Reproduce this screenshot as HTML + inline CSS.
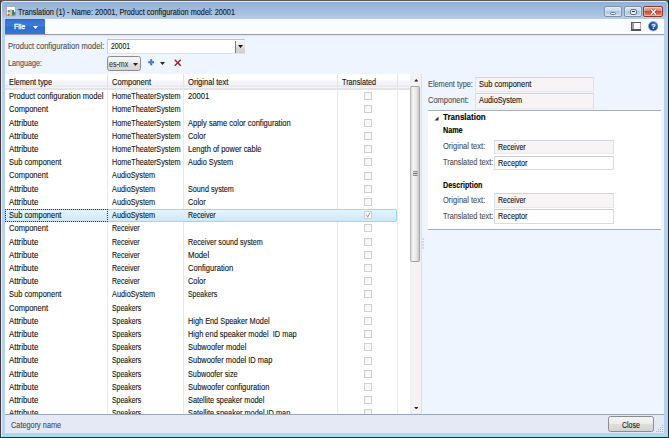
<!DOCTYPE html>
<html><head><meta charset="utf-8">
<style>
*{box-sizing:border-box;margin:0;padding:0}
html,body{width:669px;height:438px;overflow:hidden;background:#3c3c3c}
body{font-family:"Liberation Sans",sans-serif;font-size:8.2px;color:#111;position:relative}
.a{position:absolute;white-space:nowrap}
.tx{position:absolute;white-space:nowrap;line-height:10px;-webkit-text-stroke:0.1px currentColor;transform-origin:0 0}
#topline{left:0;top:0;width:669px;height:1px;background:#5e5b57}
#rcol{left:668px;top:0;width:1px;height:438px;background:#0b3440}
#brow{left:0;top:437px;width:669px;height:1px;background:#0b3440}
#frame{left:1px;top:1px;width:667px;height:436px;border-left:1px solid #e6f0fb;border-top:1px solid #d9e8f9;border-right:1px solid #92e4f2;border-bottom:1px solid #92e4f2;border-radius:3px 3px 0 0;background:linear-gradient(#8daed6 0,#97b5d8 2px,#a0bbdc 8px,#abc4e2 13px,#b5cde9 16px,#b9d0ee 18px,#b9d0ef 100%)}
#ribbon{left:5px;top:19px;width:659px;height:16px;background:#fbfcfe;border-bottom:1px solid #999ca4}
#file{left:5px;top:19px;width:40px;height:15px;background:linear-gradient(#2a58b2 0,#3472d2 1px,#3b7bd9 45%,#2f6bcc 55%,#3678d8 100%);border-radius:1px 1px 0 0;color:#fff}
#file .tx{-webkit-text-stroke:0.3px #fff}
#content{left:5px;top:35px;width:659px;height:379px;background:linear-gradient(#e5e6f2 0,#e8eaf5 1px,#edf2fc 2px,#eef5fe 3px)}
#status{left:5px;top:414px;width:659px;height:19px;background:#e5e9f5;border-top:1px solid #9ba7b8}
.lbl{color:#4e4e4e}
.wbtn{position:absolute;top:6px;height:11px;border:1px solid #7d91aa;border-radius:2px;box-shadow:inset 0 0 0 1px rgba(255,255,255,0.35);background:linear-gradient(#dbe6f3,#c8d8eb 45%,#aec4df 50%,#bed2e9 80%,#cddcee)}
.inp{position:absolute;background:#fff;border:1px solid #b9c3cf}
/* grid */
#grid{left:5px;top:74px;width:417px;height:340px;background:#fff;overflow:hidden;border-right:1px solid #d2e2f4}
#ghead{position:absolute;left:0;top:0;width:405px;height:15.5px;background:linear-gradient(#ffffff 0,#ffffff 6.4px,#f4f4fc 6.6px,#f3f3fa 11px,#ececf0 11.2px,#eaeaee 13.3px,#f6f3f5 13.5px,#f4f2f4 14px,#e4e4e8 14.2px,#e4e4e8 15.5px)}
.hs{position:absolute;top:0;width:1px;height:15px;background:#e2e4ea}
.vs{position:absolute;top:15px;width:1px;height:330px;background:#e1ecf8}
.r{position:absolute;left:0;width:405px;height:13.22px}
.r .tx{top:2.1px}
.c1{left:4.4px}.c2{left:106.8px}.c3{left:183px}
.cb{position:absolute;left:358.7px;top:2.2px;width:8.2px;height:8px;border:1px solid #cfcfcf;background:linear-gradient(135deg,#f3f3f3,#ffffff)}
#selbox{position:absolute;left:0;top:135.3px;width:392px;height:12.4px;border:1px solid #9fd5f6;border-radius:2px;background:linear-gradient(#e6f5fe,#cbe9fb)}
#focus{position:absolute;left:0;top:135.3px;width:102.8px;height:12.4px;border:1px dotted #2c3a48}
#scroll{position:absolute;left:405.2px;top:0;width:11px;height:340px;background:linear-gradient(90deg,#f1eff0,#f6f3f4 40%,#f4eff1)}
/* right */
.rl{color:#4e4e4e}
.fld{position:absolute;background:#f8f3f5;border:1px solid #e0e2e8;border-top-color:#d2d5db;border-bottom-color:#e9eaee}
.fldw{position:absolute;background:#fff;border:1px solid #d8dce2;border-top-color:#ccd0d6}
.b{font-weight:bold;color:#000}
</style></head><body>
<div class="a" id="topline"></div>
<div class="a" id="frame"></div>
<div class="a" id="rcol"></div>
<div class="a" id="brow"></div>
<!-- title icon -->
<svg class="a" style="left:6px;top:6px" width="10" height="10" viewBox="0 0 10 10">
<rect x="0.4" y="0.4" width="9.2" height="9.2" fill="#f2f8fc" stroke="#9a9a9a" stroke-width="0.7"></rect>
<rect x="1" y="1" width="8" height="2" fill="#ffffff"></rect>
<circle cx="3" cy="5.2" r="1.3" fill="#4a8ee0"></circle>
<rect x="4.1" y="3.4" width="1.9" height="6" fill="#f2c52a"></rect>
<rect x="6.1" y="4" width="1.9" height="5.4" fill="#2f6ac8"></rect>
<rect x="8" y="6" width="1.5" height="3.4" fill="#4aa048"></rect>
<path d="M1.8 9.4 L3.6 7.8" stroke="#e04a30" stroke-width="1.5"></path>
</svg>
<div class="tx fx" style="left:18.4px;top:7.8px;color:#161616;transform:scaleX(0.894)">Translation (1) - Name: 20001, Product configuration model: 20001</div>
<!-- window buttons -->
<div class="wbtn" style="left:603.5px;width:18px"><div class="a" style="left:5.6px;top:5px;width:6px;height:3.4px;background:#f2f4f6;border:1px solid #66788e;border-radius:1.5px"></div></div>
<div class="wbtn" style="left:623.5px;width:18.5px"><div class="a" style="left:5.6px;top:1.6px;width:7px;height:6px;background:#eef1f4;border:1px solid #5f6f82;border-radius:2px"></div><div class="a" style="left:7.8px;top:4.2px;width:3px;height:1.2px;background:#333"></div></div>
<div class="wbtn" style="left:643.4px;width:19.2px;border-color:#8b3b2f;background:linear-gradient(#f1bcae,#de8570 40%,#c94a30 50%,#d86a52 75%,#e99a88)"><svg class="a" style="left:4.6px;top:0.6px" width="9" height="8" viewBox="0 0 9 8"><path d="M1.9 1.3 L7.1 6.7 M7.1 1.3 L1.9 6.7" stroke="#7a3a30" stroke-width="2.3"></path><path d="M1.9 1.3 L7.1 6.7 M7.1 1.3 L1.9 6.7" stroke="#fff" stroke-width="1.3"></path></svg></div>

<div class="a" id="ribbon"></div>
<div class="a" id="file"><span class="tx fx" style="left:8.7px;top:3.1px;font-size:8.1px;transform:scaleX(0.86)">File</span><svg class="a" style="left:28px;top:7px" width="5" height="3" viewBox="0 0 5 3"><path d="M0 0 L5 0 L2.5 3Z" fill="#fff"></path></svg></div>
<!-- ribbon right icons -->
<svg class="a" style="left:630.5px;top:22px" width="10.5" height="9" viewBox="0 0 10.5 9">
<rect x="0.5" y="0.5" width="9.5" height="8" fill="#fdfdfd" stroke="#5c5c5c" stroke-width="1"></rect>
<rect x="0" y="7" width="10.5" height="2" fill="#555"></rect>
<rect x="1.2" y="1" width="1.6" height="6" fill="#8a8a8a"></rect>
</svg>
<svg class="a" style="left:647.8px;top:21.4px" width="10.4" height="10.4" viewBox="0 0 10.4 10.4">
<defs><radialGradient id="hg" cx="0.6" cy="0.35" r="0.7"><stop offset="0" stop-color="#5a9ae8"></stop><stop offset="0.5" stop-color="#1a4fc0"></stop><stop offset="1" stop-color="#0a2f8a"></stop></radialGradient></defs>
<circle cx="5.2" cy="5.2" r="4.7" fill="url(#hg)" stroke="#9aa4b4" stroke-width="0.9"></circle>
<text x="5.3" y="8.3" font-family="Liberation Sans" font-weight="bold" font-size="7.6" fill="#fff" text-anchor="middle">?</text>
</svg>

<div class="a" id="content"></div>
<div class="tx lbl" style="left: 7.6px; top: 41.9px; transform: scaleX(0.9233);">Product configuration model:</div>
<div class="tx lbl" style="left: 7.7px; top: 58.9px; transform: scaleX(0.8778);">Language:</div>
<div class="inp" style="left:107.2px;top:39.2px;width:138.2px;height:15.2px;border-color:#bcc2cb #d9dde3 #dde1e6 #cdd2d9"><span class="tx fx" style="left:2.8px;top:1.7px;transform:scaleX(0.835)">20001</span>
 <div class="a" style="left:126.8px;top:0.8px;width:10.4px;height:12px;border-left:1.2px solid #7d7d7d;background:linear-gradient(#f7f1f3,#ebe7e9 40%,#d6d6d6 60%,#d0d0d0)"><svg class="a" style="left:2px;top:4.5px" width="5" height="3" viewBox="0 0 5 3"><path d="M0 0 L5 0 L2.5 3Z" fill="#111"></path></svg></div>
</div>
<div class="a" style="left:107.2px;top:55.9px;width:33.6px;height:15.2px;border:1px solid #8a8a8a;border-radius:2.5px;background:linear-gradient(#f6f6f6,#ececec 45%,#dddddd 55%,#d6d6d6)"><div class="a" style="left:0;top:0;width:21px;height:13px;overflow:hidden"><span class="tx fx" style="left:1.2px;top:2.8px;color:#3a3a3a;transform:scaleX(0.865)">es-mx</span></div><svg class="a" style="left:25px;top:6.1px" width="5" height="3" viewBox="0 0 5 3"><path d="M0 0 L5 0 L2.5 3Z" fill="#222"></path></svg></div>
<svg class="a" style="left:147.8px;top:59.4px" width="6.5" height="6.5" viewBox="0 0 6.5 6.5"><path d="M3.25 0.3 V6.2 M0.3 3.25 H6.2" stroke="#2f62c0" stroke-width="1.9"></path><path d="M3.25 1.2 V5.3 M1.2 3.25 H5.3" stroke="#6a9ae0" stroke-width="0.7"></path></svg>
<svg class="a" style="left:160.1px;top:62.1px" width="5" height="3" viewBox="0 0 5 3"><path d="M0 0 L5 0 L2.5 3Z" fill="#222"></path></svg>
<svg class="a" style="left:174px;top:58.6px" width="7.5" height="7.5" viewBox="0 0 8 8"><path d="M0.8 0.8 L7.2 7.2 M7.2 0.8 L0.8 7.2" stroke="#a41f1f" stroke-width="1.5"></path></svg>

<div class="a" id="grid">
 <div id="ghead">
  <span class="tx" style="left: 4.4px; top: 4.1px; transform: scaleX(0.9009);">Element type</span>
  <span class="tx" style="left: 106.9px; top: 4.1px; transform: scaleX(0.9234);">Component</span>
  <span class="tx" style="left: 183px; top: 4.1px; transform: scaleX(0.9263);">Original text</span>
  <span class="tx" style="left: 337px; top: 4.1px; transform: scaleX(0.886);">Translated</span>
  <div class="hs" style="left:102px"></div><div class="hs" style="left:178px"></div><div class="hs" style="left:332px"></div><div class="hs" style="left:392px"></div>
 </div>
 <div class="vs" style="left:102px"></div><div class="vs" style="left:178px"></div><div class="vs" style="left:332px"></div><div class="vs" style="left:392px"></div>
 <div id="selbox"></div><div id="focus"></div>
<div class="r" style="top:16.00px"><span class="tx c1" style="transform: scaleX(0.9263);">Product configuration model</span><span class="tx c2" style="transform: scaleX(0.8859);">HomeTheaterSystem</span><span class="tx c3" style="transform: scaleX(0.9335);">20001</span><div class="cb"></div></div>
<div class="r" style="top:29.22px"><span class="tx c1" style="transform: scaleX(0.9234);">Component</span><span class="tx c2" style="transform: scaleX(0.8859);">HomeTheaterSystem</span><span class="tx c3"></span><div class="cb"></div></div>
<div class="r" style="top:42.44px"><span class="tx c1" style="transform: scaleX(0.9604);">Attribute</span><span class="tx c2" style="transform: scaleX(0.8859);">HomeTheaterSystem</span><span class="tx c3" style="transform: scaleX(0.9175);">Apply same color configuration</span><div class="cb"></div></div>
<div class="r" style="top:55.66px"><span class="tx c1" style="transform: scaleX(0.9604);">Attribute</span><span class="tx c2" style="transform: scaleX(0.8859);">HomeTheaterSystem</span><span class="tx c3" style="transform: scaleX(0.9053);">Color</span><div class="cb"></div></div>
<div class="r" style="top:68.88px"><span class="tx c1" style="transform: scaleX(0.9604);">Attribute</span><span class="tx c2" style="transform: scaleX(0.8859);">HomeTheaterSystem</span><span class="tx c3" style="transform: scaleX(0.912);">Length of power cable</span><div class="cb"></div></div>
<div class="r" style="top:82.10px"><span class="tx c1" style="transform: scaleX(0.9132);">Sub component</span><span class="tx c2" style="transform: scaleX(0.8859);">HomeTheaterSystem</span><span class="tx c3" style="transform: scaleX(0.8936);">Audio System</span><div class="cb"></div></div>
<div class="r" style="top:95.32px"><span class="tx c1" style="transform: scaleX(0.9234);">Component</span><span class="tx c2" style="transform: scaleX(0.8934);">AudioSystem</span><span class="tx c3"></span><div class="cb"></div></div>
<div class="r" style="top:108.54px"><span class="tx c1" style="transform: scaleX(0.9604);">Attribute</span><span class="tx c2" style="transform: scaleX(0.8934);">AudioSystem</span><span class="tx c3" style="transform: scaleX(0.8833);">Sound system</span><div class="cb"></div></div>
<div class="r" style="top:121.76px"><span class="tx c1" style="transform: scaleX(0.9604);">Attribute</span><span class="tx c2" style="transform: scaleX(0.8934);">AudioSystem</span><span class="tx c3" style="transform: scaleX(0.9053);">Color</span><div class="cb"></div></div>
<div class="r" style="top:134.98px"><span class="tx c1" style="transform: scaleX(0.9132);">Sub component</span><span class="tx c2" style="transform: scaleX(0.8934);">AudioSystem</span><span class="tx c3" style="transform: scaleX(0.8546);">Receiver</span><div class="cb"><svg class="a" style="left:0;top:0" width="6.2" height="6" viewBox="0 0 6 6"><path d="M1.2 2.4 L2.6 5.2 L4.9 0.6" stroke="#8a8a8a" stroke-width="0.8" fill="none"></path></svg></div></div>
<div class="r" style="top:148.20px"><span class="tx c1" style="transform: scaleX(0.9234);">Component</span><span class="tx c2" style="transform: scaleX(0.8546);">Receiver</span><span class="tx c3"></span><div class="cb"></div></div>
<div class="r" style="top:161.42px"><span class="tx c1" style="transform: scaleX(0.9604);">Attribute</span><span class="tx c2" style="transform: scaleX(0.8546);">Receiver</span><span class="tx c3" style="transform: scaleX(0.8779);">Receiver sound system</span><div class="cb"></div></div>
<div class="r" style="top:174.64px"><span class="tx c1" style="transform: scaleX(0.9604);">Attribute</span><span class="tx c2" style="transform: scaleX(0.8546);">Receiver</span><span class="tx c3" style="transform: scaleX(0.9496);">Model</span><div class="cb"></div></div>
<div class="r" style="top:187.86px"><span class="tx c1" style="transform: scaleX(0.9604);">Attribute</span><span class="tx c2" style="transform: scaleX(0.8546);">Receiver</span><span class="tx c3" style="transform: scaleX(0.9276);">Configuration</span><div class="cb"></div></div>
<div class="r" style="top:201.08px"><span class="tx c1" style="transform: scaleX(0.9604);">Attribute</span><span class="tx c2" style="transform: scaleX(0.8546);">Receiver</span><span class="tx c3" style="transform: scaleX(0.9053);">Color</span><div class="cb"></div></div>
<div class="r" style="top:214.30px"><span class="tx c1" style="transform: scaleX(0.9132);">Sub component</span><span class="tx c2" style="transform: scaleX(0.8934);">AudioSystem</span><span class="tx c3" style="transform: scaleX(0.8456);">Speakers</span><div class="cb"></div></div>
<div class="r" style="top:227.52px"><span class="tx c1" style="transform: scaleX(0.9234);">Component</span><span class="tx c2" style="transform: scaleX(0.8456);">Speakers</span><span class="tx c3"></span><div class="cb"></div></div>
<div class="r" style="top:240.74px"><span class="tx c1" style="transform: scaleX(0.9604);">Attribute</span><span class="tx c2" style="transform: scaleX(0.8456);">Speakers</span><span class="tx c3" style="transform: scaleX(0.8964);">High End Speaker Model</span><div class="cb"></div></div>
<div class="r" style="top:253.96px"><span class="tx c1" style="transform: scaleX(0.9604);">Attribute</span><span class="tx c2" style="transform: scaleX(0.8456);">Speakers</span><span class="tx c3" style="transform: scaleX(0.9082);">High end speaker model&nbsp; ID map</span><div class="cb"></div></div>
<div class="r" style="top:267.18px"><span class="tx c1" style="transform: scaleX(0.9604);">Attribute</span><span class="tx c2" style="transform: scaleX(0.8456);">Speakers</span><span class="tx c3" style="transform: scaleX(0.9161);">Subwoofer model</span><div class="cb"></div></div>
<div class="r" style="top:280.40px"><span class="tx c1" style="transform: scaleX(0.9604);">Attribute</span><span class="tx c2" style="transform: scaleX(0.8456);">Speakers</span><span class="tx c3" style="transform: scaleX(0.9134);">Subwoofer model ID map</span><div class="cb"></div></div>
<div class="r" style="top:293.62px"><span class="tx c1" style="transform: scaleX(0.9604);">Attribute</span><span class="tx c2" style="transform: scaleX(0.8456);">Speakers</span><span class="tx c3" style="transform: scaleX(0.8869);">Subwoofer size</span><div class="cb"></div></div>
<div class="r" style="top:306.84px"><span class="tx c1" style="transform: scaleX(0.9604);">Attribute</span><span class="tx c2" style="transform: scaleX(0.8456);">Speakers</span><span class="tx c3" style="transform: scaleX(0.9216);">Subwoofer configuration</span><div class="cb"></div></div>
<div class="r" style="top:320.06px"><span class="tx c1" style="transform: scaleX(0.9604);">Attribute</span><span class="tx c2" style="transform: scaleX(0.8456);">Speakers</span><span class="tx c3" style="transform: scaleX(0.8964);">Satellite speaker model</span><div class="cb"></div></div>
<div class="r" style="top:333.28px"><span class="tx c1" style="transform: scaleX(0.9604);">Attribute</span><span class="tx c2" style="transform: scaleX(0.8456);">Speakers</span><span class="tx c3" style="transform: scaleX(0.8991);">Satellite speaker model ID map</span><div class="cb"></div></div>
 <div id="scroll">
  <svg class="a" style="left:3.6px;top:5px" width="4.5" height="2.5" viewBox="0 0 5 3"><path d="M0 3 L5 3 L2.5 0Z" fill="#222"></path></svg>
  <div class="a" style="left:0px;top:11.8px;width:10.2px;height:176.4px;border:1px solid #a4a4a4;border-left-color:#b8b8b8;border-radius:2px;background:linear-gradient(90deg,#dadada,#f4f4f4 30%,#e8e8e8 65%,#c8c8c8)"></div>
  <svg class="a" style="left:3.3px;top:97px" width="4.5" height="5" viewBox="0 0 5 5"><path d="M0 0.5H5M0 2.5H5M0 4.5H5" stroke="#5a5a5a" stroke-width="0.9"></path></svg>
  <svg class="a" style="left:3.6px;top:332.8px" width="4.5" height="2.5" viewBox="0 0 5 3"><path d="M0 0 L5 0 L2.5 3Z" fill="#222"></path></svg>
 </div>
</div>
<!-- splitter dots -->
<svg class="a" style="left:421.6px;top:238px" width="2" height="12" viewBox="0 0 2 12"><path d="M1 0.5V1.5M1 3.5V4.5M1 6.5V7.5M1 9.5V10.5" stroke="#7d8b9c" stroke-width="1"></path></svg>

<!-- right panel -->
<div class="tx rl" style="left: 427.7px; top: 79.6px; transform: scaleX(0.896);">Element type:</div>
<div class="fld" style="left:474.6px;top:76.9px;width:119.5px;height:15.5px"><span class="tx" style="left: 3.2px; top: 1.7px; transform: scaleX(0.9132);">Sub component</span></div>
<div class="tx rl" style="left: 427.7px; top: 96px; transform: scaleX(0.9168);">Component:</div>
<div class="fld" style="left:474.6px;top:93.4px;width:119.5px;height:15.2px"><span class="tx" style="left: 3.2px; top: 1.6px; transform: scaleX(0.8934);">AudioSystem</span></div>
<div class="a" style="left:427.6px;top:109.5px;width:233.5px;height:120px;background:#fff;border-top:1px solid #a9aeb6;border-bottom:1px solid #a9aeb6"></div>
<svg class="a" style="left:433.8px;top:116.2px" width="5" height="5" viewBox="0 0 5 5"><path d="M4.5 0.5 L4.5 4.5 L0.5 4.5Z" fill="#333"></path></svg>
<div class="tx b fx" style="left:442.9px;top:112.1px;font-size:8.3px;transform:scaleX(0.965)">Translation</div>
<div class="tx b fx" style="left:442.9px;top:125.9px;transform:scaleX(0.88)">Name</div>
<div class="tx rl" style="left: 442.9px; top: 141.5px; transform: scaleX(0.9194);">Original text:</div>
<div class="fld" style="left:494.4px;top:139.7px;width:119.6px;height:14.3px"><span class="tx" style="left: 2.4px; top: 1.9px; transform: scaleX(0.8546);">Receiver</span></div>
<div class="tx rl" style="left: 442.9px; top: 157.5px; transform: scaleX(0.8956);">Translated text:</div>
<div class="fldw" style="left:494.4px;top:156px;width:119.6px;height:13.9px"><span class="tx" style="left: 2.4px; top: 1.9px; transform: scaleX(0.8883);">Receptor</span></div>
<div class="tx b fx" style="left:442.7px;top:180.8px;transform:scaleX(0.875)">Description</div>
<div class="tx rl" style="left: 442.9px; top: 195.5px; transform: scaleX(0.9194);">Original text:</div>
<div class="fld" style="left:494.4px;top:193.2px;width:119.6px;height:14.4px"><span class="tx" style="left: 2.4px; top: 1.9px; transform: scaleX(0.8546);">Receiver</span></div>
<div class="tx rl" style="left: 442.9px; top: 211.5px; transform: scaleX(0.8956);">Translated text:</div>
<div class="fldw" style="left:494.4px;top:209.2px;width:119.6px;height:14.4px"><span class="tx" style="left: 2.4px; top: 1.9px; transform: scaleX(0.8883);">Receptor</span></div>

<div class="a" id="status"><span class="tx" style="left: 5.8px; top: 5.6px; color: rgb(74, 74, 74); transform: scaleX(0.896);">Category name</span>
<div class="a" style="left:603px;top:1.4px;width:46px;height:15.2px;border:1px solid #8b8c8c;border-radius:2.5px;background:linear-gradient(#f3f3f3,#ececec 50%,#dedede 52%,#d3d3d3)"><span class="tx" style="left: 12.6px; top: 3.4px; color: rgb(26, 26, 26); transform: scaleX(0.8555);">Close</span></div>
<svg class="a" style="left:650px;top:9px" width="9" height="9" viewBox="0 0 9 9"><g fill="#aab4c4"><rect x="7" y="1" width="1" height="1"></rect><rect x="5" y="3" width="1" height="1"></rect><rect x="7" y="3" width="1" height="1"></rect><rect x="3" y="5" width="1" height="1"></rect><rect x="5" y="5" width="1" height="1"></rect><rect x="7" y="5" width="1" height="1"></rect><rect x="1" y="7" width="1" height="1"></rect><rect x="3" y="7" width="1" height="1"></rect><rect x="5" y="7" width="1" height="1"></rect><rect x="7" y="7" width="1" height="1"></rect></g></svg>
</div>

</body></html>
